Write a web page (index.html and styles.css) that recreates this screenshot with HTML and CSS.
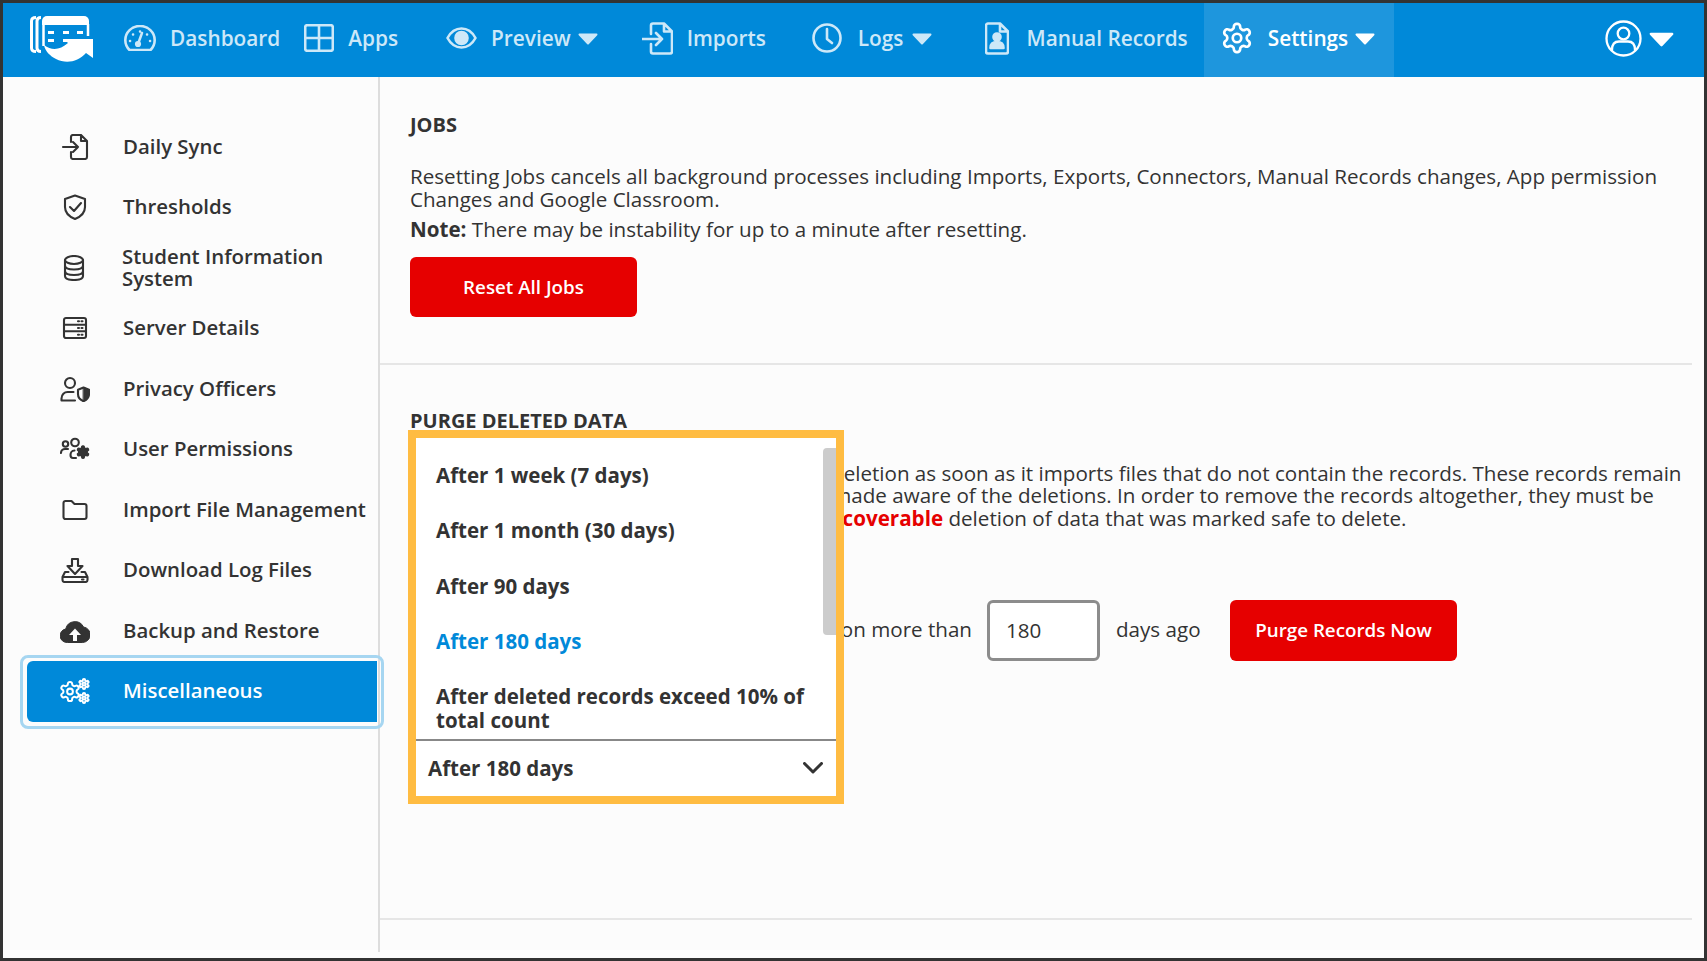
FILE: index.html
```html
<!DOCTYPE html>
<html lang="en">
<head>
<meta charset="utf-8">
<title>Settings - Miscellaneous</title>
<link rel="stylesheet" href="styles.css">
</head>
<body>
<svg class="defs" width="0" height="0" aria-hidden="true">
  <symbol id="gear" viewBox="0 0 24 24">
    <path d="M12.22 2h-.44a2 2 0 0 0-2 2v.18a2 2 0 0 1-1 1.73l-.43.25a2 2 0 0 1-2 0l-.15-.08a2 2 0 0 0-2.73.73l-.22.38a2 2 0 0 0 .73 2.73l.15.1a2 2 0 0 1 1 1.72v.51a2 2 0 0 1-1 1.74l-.15.09a2 2 0 0 0-.73 2.73l.22.38a2 2 0 0 0 2.73.73l.15-.08a2 2 0 0 1 2 0l.43.25a2 2 0 0 1 1 1.73V20a2 2 0 0 0 2 2h.44a2 2 0 0 0 2-2v-.18a2 2 0 0 1 1-1.73l.43-.25a2 2 0 0 1 2 0l.15.08a2 2 0 0 0 2.73-.73l.22-.39a2 2 0 0 0-.73-2.73l-.15-.08a2 2 0 0 1-1-1.74v-.5a2 2 0 0 1 1-1.74l.15-.09a2 2 0 0 0 .73-2.73l-.22-.38a2 2 0 0 0-2.73-.73l-.15.08a2 2 0 0 1-2 0l-.43-.25a2 2 0 0 1-1-1.73V4a2 2 0 0 0-2-2z"/>
    <circle cx="12" cy="12" r="3"/>
  </symbol>
  <symbol id="caret" viewBox="0 0 20 12">
    <path d="M1.500 1.500h17L10 10.500z" fill="currentColor" stroke="currentColor" stroke-width="2" stroke-linejoin="round"/>
  </symbol>
</svg>
<div class="frame">
  <header class="nav">
    <svg class="logo" width="63" height="47" viewBox="0 0 63 47">
      <g fill="none" stroke="#fff" stroke-width="3">
        <path d="M6 1.500C3 1.500 1.500 3 1.500 5v27c0 2 1.500 3.500 4.500 3.500"/>
        <path d="M11 1.500C8.500 1.500 7 3 7 5v27c0 2 1.500 3.500 4 3.500"/>
        <path d="M13.500 8v22M58 8v12" stroke-width="2.500"/>
      </g>
      <path fill="#fff" d="M12 9V5a5 5 0 0 1 5-5h37a5 5 0 0 1 5 5v4z"/>
      <path fill="#fff" d="M18 15h6v3h-6zM33 15h6v3h-6zM47 15h6v3h-6zM18 23h6v3h-6zM33 23h6v3h-6z"/>
      <path fill="#fff" d="M14 29c8 6 16 5 24-2l-4-4 29 0v19l-7-5c-8 9-20 11-30 6-6-3-11-8-12-14z"/>
    </svg>
    <a class="nav-item item-dashboard">
      <svg class="nav-icon" width="32" height="26" viewBox="0 0 32 26"><path d="M5.500 25h21c2.500-2.500 4.200-6 4.200-10A14.700 14 0 0 0 1.300 15c0 4 1.700 7.500 4.200 10z"/><path d="M14 19l4-11M6 16h.1M9 9.500h.1M16 6.500h.1M23 9.500h.1M26 16h.1" stroke-width="2.500"/><circle cx="14" cy="19" r="1.800" fill="currentColor"/></svg>
      <span>Dashboard</span>
    </a>
    <a class="nav-item item-apps">
      <svg class="nav-icon" width="30" height="28" viewBox="0 0 30 28"><rect x="1.200" y="1.200" width="27.600" height="25.600" rx="2"/><path d="M15 1v26M1 14h28"/></svg>
      <span>Apps</span>
    </a>
    <a class="nav-item item-preview">
      <svg class="nav-icon" width="31" height="22" viewBox="0 0 31 22"><path d="M1.500 11C5 4.500 10 1.500 15.500 1.500S26 4.500 29.500 11C26 17.500 21 20.500 15.500 20.500S5 17.500 1.500 11z"/><circle cx="15.500" cy="11" r="6" fill="currentColor"/></svg>
      <span>Preview</span>
      <svg class="caret" width="20" height="12"><use href="#caret"/></svg>
    </a>
    <a class="nav-item item-imports">
      <svg class="nav-icon" width="31" height="33" viewBox="0 0 31 33"><path d="M9 12V3.500a2 2 0 0 1 2-2h11l8 8v20a2 2 0 0 1-2 2H11a2 2 0 0 1-2-2V22M22 1.500v8h8M0 17h20M14 11l6 6-6 6"/></svg>
      <span>Imports</span>
    </a>
    <a class="nav-item item-logs">
      <svg class="nav-icon" width="30" height="30" viewBox="0 0 30 30"><circle cx="15" cy="15" r="13.500"/><path d="M15 6v10l5 4"/></svg>
      <span>Logs</span>
      <svg class="caret" width="20" height="12"><use href="#caret"/></svg>
    </a>
    <a class="nav-item item-manual">
      <svg class="nav-icon" width="24" height="33" viewBox="0 0 24 33"><path d="M3 1.500h12l8 8v20a2 2 0 0 1-2 2H3a2 2 0 0 1-2-2v-26a2 2 0 0 1 2-2zM15 1.500v8h8"/><circle cx="12" cy="15" r="3.500" fill="currentColor"/><path d="M5.500 26c0-4 2.500-6 6.500-6s6.500 2 6.500 6z" fill="currentColor"/></svg>
      <span>Manual Records</span>
    </a>
    <a class="nav-item item-settings">
      <svg class="gear-icon" width="34" height="34"><use href="#gear"/></svg>
      <span>Settings</span>
      <svg class="caret" width="20" height="12"><use href="#caret"/></svg>
    </a>
    <a class="nav-user">
      <svg class="user-icon" width="37" height="37" viewBox="0 0 37 37"><circle cx="18.500" cy="18.500" r="17"/><circle cx="18.500" cy="13.500" r="5.800"/><path d="M7 30c0-6 3-8.500 7-8.500h9c4 0 7 2.500 7 8.500"/></svg>
      <svg class="caret caret-user" width="25" height="15"><use href="#caret"/></svg>
    </a>
  </header>
  <div class="layout">
    <aside class="sidebar">
      <ul class="side-list">
        <li class="side-item">
          <svg class="side-icon" viewBox="0 0 30 26"><path d="M11 8V3a2 2 0 0 1 2-2h8l6 6v16a2 2 0 0 1-2 2H13a2 2 0 0 1-2-2v-5M21 1v6h6M3 13h15M13 8l5 5-5 5"/></svg>
          <span>Daily Sync</span>
        </li>
        <li class="side-item">
          <svg class="side-icon" viewBox="0 0 30 26"><path d="M15 1.500l10 3.500v8c0 6-5 10-10 12C10 23 5 19 5 13V5zM10 13l4 4 7-8"/></svg>
          <span>Thresholds</span>
        </li>
        <li class="side-item side-item-wrap">
          <svg class="side-icon" viewBox="0 0 30 26"><ellipse cx="14" cy="5" rx="9" ry="4"/><path d="M5 5v16c0 2.500 4 4 9 4s9-1.500 9-4V5M5 10.500c0 2.500 4 4 9 4s9-1.500 9-4M5 16c0 2.500 4 4 9 4s9-1.500 9-4"/></svg>
          <span>Student Information System</span>
        </li>
        <li class="side-item">
          <svg class="side-icon" viewBox="0 0 30 26"><rect x="4" y="3" width="22" height="20" rx="2"/><path d="M4 9.700h22M4 16.300h22M18 6.300h1M21.500 6.300h1M18 13h1M21.500 13h1M18 19.700h1M21.500 19.700h1"/></svg>
          <span>Server Details</span>
        </li>
        <li class="side-item">
          <svg class="side-icon" viewBox="0 0 30 26"><circle cx="10" cy="7" r="5"/><path d="M15 24.500H1.500v-2c0-4 3-6.500 6-6.500h6"/><path d="M23.500 11.500l5.500 2.200v4.300c0 3.500-2.500 6-5.500 7.200-3-1.200-5.500-3.700-5.500-7.200v-4.300z"/><path class="solid" d="M23.500 11.500l5.500 2.200v4.300c0 3.500-2.500 6-5.500 7.200z"/></svg>
          <span>Privacy Officers</span>
        </li>
        <li class="side-item">
          <svg class="side-icon" viewBox="0 0 30 26"><circle cx="5.500" cy="8" r="2.700"/><path d="M1 17c0-2.500 2-4 4-4h3"/><circle cx="15" cy="6.500" r="3.800"/><path d="M16 22h-3c-1.500 0-2.500-1-2.500-3s1-4.500 4-4.500"/><use href="#gear" x="15.500" y="8.500" width="15" height="15" class="solid-gear"/></svg>
          <span>User Permissions</span>
        </li>
        <li class="side-item">
          <svg class="side-icon" viewBox="0 0 30 26"><path d="M3.500 6a2 2 0 0 1 2-2h6l3 3h10a2 2 0 0 1 2 2v11a2 2 0 0 1-2 2h-19a2 2 0 0 1-2-2z"/></svg>
          <span>Import File Management</span>
        </li>
        <li class="side-item">
          <svg class="side-icon" viewBox="0 0 30 26"><path d="M12 2h6v7h4.500L15 17 7.500 9H12zM8.500 15H5l-2.500 5v3a2 2 0 0 0 2 2h21a2 2 0 0 0 2-2v-3L25 15h-3.500M3 20h24M22 22.500h1.500"/></svg>
          <span>Download Log Files</span>
        </li>
        <li class="side-item">
          <svg class="side-icon" viewBox="0 0 30 26"><path class="solid" d="M7 24.500a6.800 6.800 0 0 1-1.300-13.500A9.500 9.500 0 0 1 23.500 9a7.800 7.800 0 0 1-.5 15.500z"/><path class="hole" d="M15 10.500l-6 6.500h4v6h4v-6h4z"/></svg>
          <span>Backup and Restore</span>
        </li>
        <li class="side-item side-item-active">
          <svg class="side-icon" viewBox="0 0 30 26"><use href="#gear" x="-1.500" y="2" width="23" height="23"/><use href="#gear" x="18" y="0" width="12" height="12" class="thick-gear"/><use href="#gear" x="18" y="14" width="12" height="12" class="thick-gear"/></svg>
          <span>Miscellaneous</span>
        </li>
      </ul>
    </aside>
    <main class="content">
      <section class="section section-jobs">
        <h2 class="heading">JOBS</h2>
        <p class="body-text">Resetting Jobs cancels all background processes including Imports, Exports, Connectors, Manual Records changes, App permission Changes and Google Classroom.</p>
        <p class="body-text note"><strong>Note:</strong> There may be instability for up to a minute after resetting.</p>
        <button class="danger danger-reset" type="button">Reset All Jobs</button>
      </section>
      <section class="section section-purge">
        <h2 class="heading">PURGE DELETED DATA</h2>
        <p class="body-text purge-text">The system automatically labels records for deletion as soon as it imports files that do not contain the records. These records remain<br>in our databases, and connected clients are made aware of the deletions. In order to remove the records altogether, they must be<br>purged. Each purge is a permanent and <strong class="alert">unrecoverable</strong> deletion of data that was marked safe to delete.</p>
        <div class="purge-row">
          <span class="purge-label">Purge records marked for deletion on more than</span>
          <input class="days-input" type="text" value="180" aria-label="Days">
          <span class="days-label">days ago</span>
          <button class="danger danger-purge" type="button">Purge Records Now</button>
        </div>
        <div class="dropdown">
          <ul class="drop-list">
            <li class="drop-item">After 1 week (7 days)</li>
            <li class="drop-item">After 1 month (30 days)</li>
            <li class="drop-item">After 90 days</li>
            <li class="drop-item drop-item-active">After 180 days</li>
            <li class="drop-item drop-item-long">After deleted records exceed 10% of total count</li>
          </ul>
          <span class="drop-scroll"></span>
          <div class="drop-select">
            <span>After 180 days</span>
            <svg class="chevron" width="20" height="12" viewBox="0 0 20 12"><path d="M1.500 1.500L10 10l8.500-8.500"/></svg>
          </div>
        </div>
      </section>
    </main>
  </div>
</div>
</body>
</html>
```
FILE: styles.css
```css
* { box-sizing: border-box; }
html, body { margin: 0; padding: 0; }
body {
  font-family: "Open Sans", "Noto Sans", sans-serif;
  color: #333;
  background: #333;
}
.defs { position: absolute; }
.frame {
  width: 1707px;
  height: 961px;
  border: 3px solid #333;
  background: #fcfcfc;
  overflow: hidden;
}

/* top bar */
.nav {
  display: flex;
  align-items: center;
  height: 74px;
  background: #0089d9;
  padding-left: 27px;
}
.logo { flex: none; margin-top: -1px; margin-right: 31px; }
.nav-item {
  display: flex;
  align-items: center;
  height: 100%;
  padding-bottom: 4px;
  gap: 14px;
  color: #cde8f8;
  font-size: 20.8px;
  font-weight: 600;
}
.nav-icon, .gear-icon, .user-icon {
  flex: none;
  fill: none;
  stroke: currentColor;
  stroke-width: 2.6;
  stroke-linecap: round;
  stroke-linejoin: round;
}
.gear-icon { stroke-width: 1.9; margin: 0 0 0 -2px; }
.caret { flex: none; margin-left: -7px; margin-top: 1px; }
.item-apps { margin-left: 24px; }
.item-preview { margin-left: 48px; }
.item-imports { margin-left: 44px; }
.item-logs { margin-left: 46px; gap: 16px; }
.item-manual { margin-left: 53px; gap: 17px; }
.item-settings {
  margin-left: 16px;
  padding: 0 19px 4px 18px;
  gap: 14px;
  background: #1e96dd;
  color: #fff;
}
.nav-user {
  display: flex;
  align-items: center;
  gap: 7px;
  margin-left: auto;
  margin-right: 30px;
  padding-bottom: 4px;
  color: #fff;
}
.user-icon { stroke-width: 2.3; }
.caret-user { margin: 2px 0 0; }

/* sidebar */
.layout { display: flex; align-items: flex-start; height: 881px; }
.sidebar {
  flex: none;
  width: 377px;
  height: 875px;
  border-right: 2px solid #ddd;
  padding-top: 39.5px;
}
.side-list { list-style: none; margin: 0; padding: 0; }
.side-item {
  display: flex;
  align-items: center;
  gap: 33px;
  height: 60.5px;
  width: 350px;
  margin-left: 24px;
  padding-left: 33px;
  font-size: 20.4px;
  line-height: 22px;
  font-weight: 600;
  color: #333;
}
.side-item span { margin-bottom: 2px; }
.side-item-wrap span { margin-left: -1px; width: 220px; }
.side-icon {
  flex: none;
  width: 30px;
  height: 26px;
  fill: none;
  stroke: currentColor;
  stroke-width: 2.1;
  stroke-linecap: round;
  stroke-linejoin: round;
}
.solid { fill: currentColor; stroke-width: 1; }
.hole { fill: #fcfcfc; stroke: none; }
.solid-gear { fill: currentColor; stroke-width: 2; }
.thick-gear { stroke-width: 4; }
.side-item-active {
  position: relative;
  z-index: 1;
  background: #0089d9;
  color: #fff;
  border-radius: 6px 0 0 6px;
}
.side-item-active::after {
  content: "";
  position: absolute;
  inset: -6px -7px -7px -7px;
  border: 3px solid #a6d6f1;
  border-radius: 8px;
}

/* content */
.content { flex: 1; min-width: 0; margin-right: 12px; }
.section {
  position: relative;
  padding-left: 30px;
  border-bottom: 2px solid #e6e6e6;
}
.section-jobs { height: 288px; padding-top: 37px; }
.section-purge { height: 555px; padding-top: 45px; }
.heading {
  margin: 0;
  font-size: 20px;
  line-height: 22px;
  font-weight: 700;
  color: #333;
}
.body-text {
  margin: 0;
  font-size: 20.6px;
  line-height: 23px;
  color: #333;
}
.section-jobs .heading { margin-bottom: 29px; }
.note { margin-top: 7px; }
.purge-text { margin-top: 30px; line-height: 22.4px; white-space: nowrap; }
.alert { color: #e60000; font-weight: 700; }
.danger {
  display: block;
  border: 0;
  border-radius: 6px;
  background: #e60000;
  color: #fff;
  font: 600 18.8px "Open Sans", sans-serif;
}
.danger-reset { width: 227px; height: 60px; margin-top: 16px; }
.danger-purge { width: 227px; height: 61px; margin-left: 30px; padding-bottom: 2px; }
.purge-row {
  display: flex;
  align-items: center;
  margin-top: 70.6px;
  font-size: 20.6px;
}
.purge-label {
  width: 562px;
  margin-right: 15px;
  padding-bottom: 2px;
  white-space: nowrap;
  text-align: right;
}
.days-input {
  width: 113px;
  height: 61px;
  border: 3px solid #8c8c8c;
  border-radius: 6px;
  background: #fff;
  padding: 0 0 0 16px;
  font: 20.6px "Open Sans", sans-serif;
  color: #333;
}
.days-label { margin-left: 16px; width: 84px; padding-bottom: 2px; white-space: nowrap; }

/* open dropdown */
.dropdown {
  position: absolute;
  left: 28px;
  top: 65px;
  width: 436px;
  height: 374px;
  border: 8px solid #ffbc42;
  background: #fff;
  font-weight: 700;
}
.drop-list {
  list-style: none;
  margin: 0;
  padding: 9px 30px 0 20px;
  height: 301px;
  overflow: hidden;
}
.drop-item {
  padding: 15.75px 0;
  font-size: 20.5px;
  line-height: 24px;
  color: #333;
}
.drop-item-long { padding-top: 14.5px; }
.drop-item-active { color: #0089d9; }
.drop-scroll {
  position: absolute;
  top: 10px;
  right: 0;
  width: 13px;
  height: 187px;
  background: #ccc;
  border-radius: 4px 0 0 4px;
}
.drop-select {
  display: flex;
  align-items: center;
  justify-content: space-between;
  height: 57px;
  padding: 0 13px 1px 12px;
  border-top: 2px solid #888;
  font-size: 20.5px;
  color: #333;
}
.chevron {
  fill: none;
  stroke: #333;
  stroke-width: 3;
  stroke-linecap: round;
  stroke-linejoin: round;
}
```
